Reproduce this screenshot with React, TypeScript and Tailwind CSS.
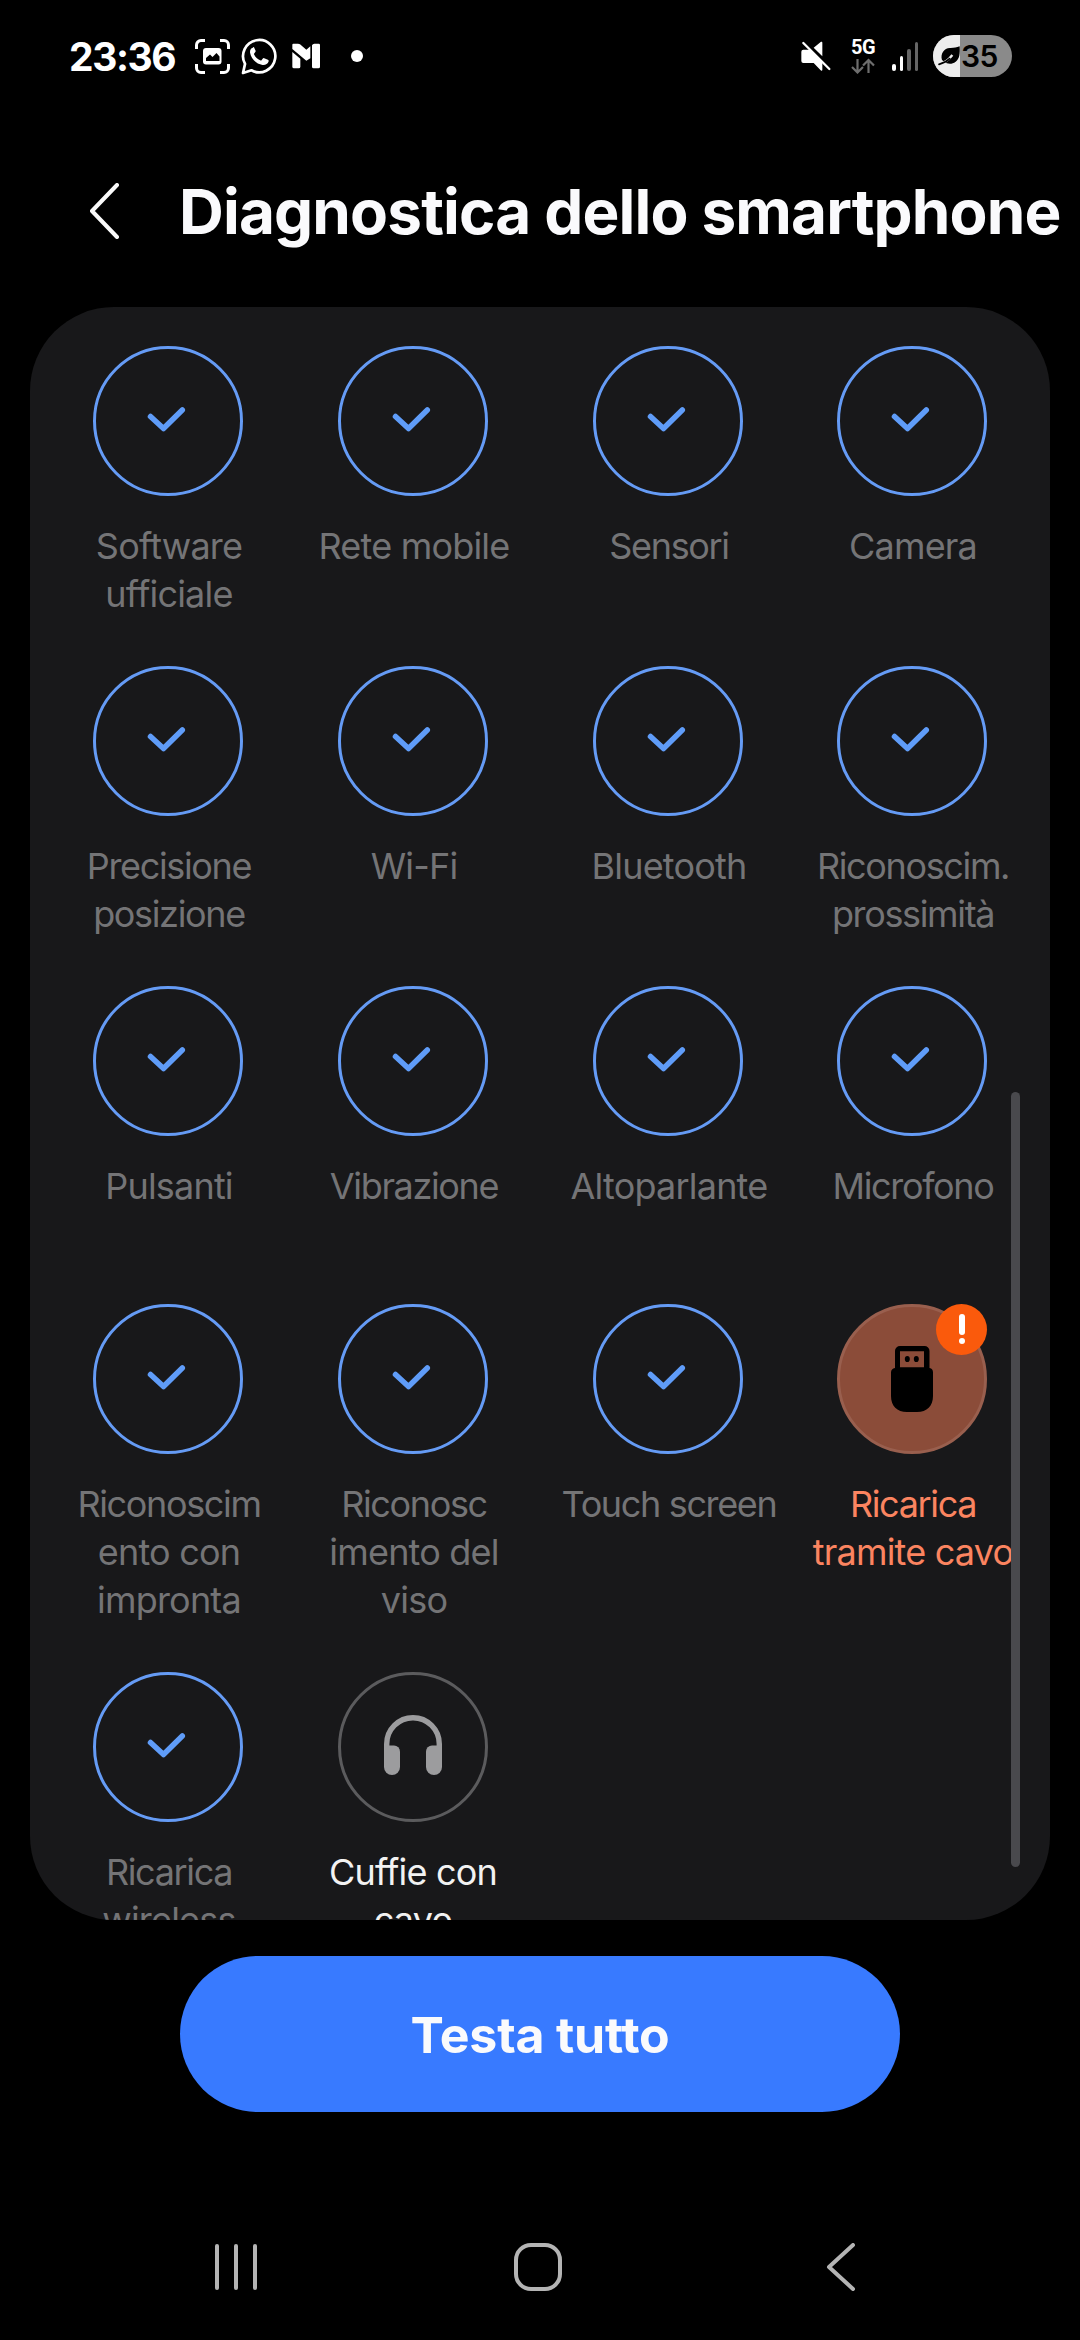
type TCheck = {
    lines: string[];
    state?: "done" | "failed" | "pending";
};

type TRow = {
    height: string;
    checks: TCheck[];
};

const rows: TRow[] = [
    {
        height: "h-[320px]",
        checks: [
            { lines: ["Software", "ufficiale"] },
            { lines: ["Rete mobile"] },
            { lines: ["Sensori"] },
            { lines: ["Camera"] },
        ],
    },
    {
        height: "h-[320px]",
        checks: [
            { lines: ["Precisione", "posizione"] },
            { lines: ["Wi-Fi"] },
            { lines: ["Bluetooth"] },
            { lines: ["Riconoscim.", "prossimità"] },
        ],
    },
    {
        height: "h-[318px]",
        checks: [
            { lines: ["Pulsanti"] },
            { lines: ["Vibrazione"] },
            { lines: ["Altoparlante"] },
            { lines: ["Microfono"] },
        ],
    },
    {
        height: "h-[368px]",
        checks: [
            { lines: ["Riconoscim", "ento con", "impronta"] },
            { lines: ["Riconosc", "imento del", "viso"] },
            { lines: ["Touch screen"] },
            { lines: ["Ricarica", "tramite cavo"], state: "failed" },
        ],
    },
    {
        height: "h-[320px]",
        checks: [
            { lines: ["Ricarica", "wireless"] },
            { lines: ["Cuffie con", "cavo"], state: "pending" },
        ],
    },
];

// lines that need a bit less letter spacing
const tightLines = [
    "Sensori",
    "Precisione",
    "posizione",
    "Riconoscim.",
    "prossimità",
    "Vibrazione",
    "Microfono",
    "Riconoscim",
    "Riconosc",
    "Touch screen",
    "Ricarica",
];

const StatusBar = () => {
    return (
        <div className="flex h-28 items-center justify-between pr-[68px] pl-[69px]">
            <div className="flex items-center">
                <span className="w-[126px] text-[39px] leading-none font-bold tracking-[-1.4px]">23:36</span>
                <svg className="h-[35px] w-[35px]" viewBox="0 0 35 35" fill="none">
                    <path
                        d="M1.5 10V6a4.500 4.500 0 0 1 4.500-4.500H10M25 1.500h4A4.500 4.500 0 0 1 33.500 6v4M33.500 25v4a4.500 4.500 0 0 1-4.500 4.500h-4M10 33.500H6A4.500 4.500 0 0 1 1.500 29v-4"
                        stroke="white"
                        strokeWidth="3"
                    />
                    <rect x="8" y="9" width="18.500" height="16.500" rx="3" fill="white" />
                    <path d="M11 22v-3l4-3.500 2.500 2.500 4-4 3 3.500V22Z" fill="black" />
                </svg>
                <svg className="ml-[11px] h-[37px] w-[37px]" viewBox="0 0 110 110" fill="none">
                    <path
                        d="M6 104l6-27A48 48 0 1 1 31 96Z"
                        stroke="white"
                        strokeWidth="8"
                        strokeLinejoin="round"
                    />
                    <path
                        d="M35 29c-6 2-9 8-8 15 3 18 18 33 37 36 8 1 16-3 18-10 1-3 0-4-2-5l-11-5c-2-1-3 0-4 1l-4 5c-1 1-2 1-4 0-8-3-14-9-18-17-1-2 0-3 1-4l3-4c1-1 1-3 0-4l-4-9c-1-2-2-2-4 1Z"
                        fill="white"
                    />
                </svg>
                <svg className="ml-3.5 h-[26px] w-7" viewBox="0 0 84 76" fill="white">
                    <path d="M1 26l24 20v24a5 5 0 0 1-5 5H6a5 5 0 0 1-5-5Z" />
                    <path d="M4 1h14a10 10 0 0 1 6 2l19 16L55 9v36L43 52 1 17V4a3 3 0 0 1 3-3Z" />
                    <path d="M60 6a8 8 0 0 1 8-5h12a4 4 0 0 1 4 4v65a5 5 0 0 1-5 5H65a5 5 0 0 1-5-5Z" />
                </svg>
                <span className="ml-[31px] h-3 w-3 rounded-full bg-white" />
            </div>
            <div className="flex items-center">
                <svg className="h-[30px] w-[30px]" viewBox="0 0 90 90" fill="white">
                    <path d="M7 26h19l38 38v22c0 3-3 4-5 2L38 66H7a6 6 0 0 1-6-6V32a6 6 0 0 1 6-6Z" />
                    <path d="M64 5v41L38 20 59 3c2-2 5-1 5 2Z" />
                    <path d="M7 6l78 78" stroke="white" strokeWidth="7" strokeLinecap="round" />
                </svg>
                <div className="ml-5 flex w-6 flex-col items-center">
                    <span className="font-['Roboto',sans-serif] text-[20px] leading-[17px] font-bold tracking-[-0.5px]">5G</span>
                    <svg className="mt-0.5 h-4 w-6" viewBox="0 0 24 16" fill="none" stroke="#6e6e6e" strokeWidth="2.2">
                        <path d="M6.500 1v13M1 9l5.500 5.500L12 9M17.500 15V2M12 7.500 17.500 2 23 7.500" />
                    </svg>
                </div>
                <div className="ml-[17px] flex items-end gap-1">
                    <span className="h-[7px] w-[3.500px] rounded-full bg-white" />
                    <span className="h-[15px] w-[3.500px] rounded-full bg-white" />
                    <span className="h-[22px] w-[3.500px] rounded-full bg-[#666]" />
                    <span className="h-[29px] w-[3.500px] rounded-full bg-[#666]" />
                </div>
                <div className="ml-[15px] flex h-[42px] w-[79px] items-center overflow-hidden rounded-full bg-[#8a8a8a] text-black">
                    <div className="flex h-full w-[27px] shrink-0 items-center justify-end bg-[#ededed]">
                        <svg className="h-5 w-[22px]" viewBox="0 0 66 60">
                            <path d="M12 42C6 22 20 4 38 6c10 0 18-1 27-5 1 22 0 38-12 46-12 9-26 7-34 0Z" />
                            <path d="M1 55c14-2 30-12 42-28" fill="none" stroke="#ededed" strokeWidth="7" />
                            <path d="M3 55c12-3 24-9 32-17" fill="none" stroke="black" strokeWidth="5" strokeLinecap="round" />
                        </svg>
                    </div>
                    <span className="ml-px text-[30px] leading-none font-semibold tracking-[-0.5px]">35</span>
                </div>
            </div>
        </div>
    );
};

const UsbIcon = () => (
    <svg className="h-[66px] w-[42px]" viewBox="0 0 42 66">
        <path
            fillRule="evenodd"
            d="M4 22V5a5 5 0 0 1 5-5h24.500a5 5 0 0 1 5 5v17c2.500.5 3.500 2 3.500 4.500V50c0 10-6 16-16 16H16C6 66 0 60 0 50V26.500C0 24 1.500 22.500 4 22ZM9 5.300v16h24v-16Z"
        />
        <ellipse cx="16.300" cy="13" rx="2.500" ry="3.100" />
        <ellipse cx="25.300" cy="13" rx="2.500" ry="3.100" />
    </svg>
);

const HeadphonesIcon = () => (
    <svg className="-mt-1 h-[60px] w-[58px]" viewBox="0 0 58 60" fill="#9c9c9e">
        <path d="M2.700 40V29a26.300 26.300 0 0 1 52.600 0v11" fill="none" stroke="#9c9c9e" strokeWidth="5.400" />
        <path d="M0 30.500h10a6 6 0 0 1 6 6V52a8 8 0 0 1-16 0Z" />
        <path d="M58 30.500H48a6 6 0 0 0-6 6V52a8 8 0 0 0 16 0Z" />
    </svg>
);

const CheckItem = ({ lines, state = "done" }: TCheck) => {
    return (
        <div className="flex flex-col items-center">
            {state === "done" && (
                <div className="h-[150px] w-[150px] rounded-full border-3 border-[#659bf5]">
                    <svg className="h-36 w-36" viewBox="3 3 144 144" fill="none">
                        <path
                            d="M57.500 70.500 70.500 82.500 89.300 64"
                            stroke="#5f9cf8"
                            strokeWidth="5.500"
                            strokeLinecap="round"
                            strokeLinejoin="round"
                        />
                    </svg>
                </div>
            )}
            {state === "failed" && (
                <div className="relative flex h-[150px] w-[150px] items-center justify-center rounded-full border-3 border-[#995f4e] bg-[#8b4c39]">
                    <UsbIcon />
                    <div className="absolute -top-[3px] -right-[3px] flex h-[51px] w-[51px] flex-col items-center gap-[3px] rounded-full bg-[#fa5a0c] pt-2.5">
                        <span className="h-[21px] w-1.5 rounded-full bg-white" />
                        <span className="h-1.5 w-1.5 rounded-full bg-white" />
                    </div>
                </div>
            )}
            {state === "pending" && (
                <div className="flex h-[150px] w-[150px] items-center justify-center rounded-full border-3 border-[#5b5b5d]">
                    <HeadphonesIcon />
                </div>
            )}
            <div
                className={
                    state === "done"
                        ? "mt-[26px] pl-0.5 text-[#747476]"
                        : state === "failed"
                          ? "mt-[26px] pl-0.5 text-[#fb8460]"
                          : "mt-[26px] text-[#f2f2f2]"
                }
            >
                {lines.map((line) => (
                    <p
                        key={line}
                        className={
                            tightLines.includes(line)
                                ? "text-center text-[36px] leading-[48px] tracking-[-1.35px] whitespace-nowrap"
                                : "text-center text-[36px] leading-[48px] tracking-[-0.8px] whitespace-nowrap"
                        }
                    >
                        {line}
                    </p>
                ))}
            </div>
        </div>
    );
};

const App = () => {
    return (
        <div className="flex h-[2340px] w-[1080px] flex-col overflow-hidden bg-black font-['Inter',sans-serif] text-white">
            <StatusBar />
            <header className="flex h-[195px] items-start pt-[59px] pl-[88px]">
                <svg className="mt-3 h-14 w-8" viewBox="0 0 32 56" fill="none">
                    <path d="M29 2 4 28l25 26" stroke="#fafafa" strokeWidth="4" strokeLinecap="round" strokeLinejoin="round" />
                </svg>
                <h1 className="mt-px ml-[59px] text-[62px] leading-[80px] font-bold tracking-[-0.85px] whitespace-nowrap text-[#fafafc]">
                    Diagnostica dello smartphone
                </h1>
            </header>
            <main className="relative mx-[30px] h-[1613px] shrink-0 overflow-hidden rounded-[84px] bg-[#18181a] pt-[39px] pl-[18px]">
                {rows.map((row, index) => (
                    <div key={index} className={`grid grid-cols-[240px_250px_260px_228px] ${row.height}`}>
                        {row.checks.map((check) => (
                            <CheckItem key={check.lines[0]} {...check} />
                        ))}
                    </div>
                ))}
                <div className="absolute top-[785px] right-[30px] h-[775px] w-[9px] rounded-full bg-[#49494d]" />
            </main>
            <button className="mx-auto mt-9 h-[156px] w-[720px] shrink-0 rounded-full bg-[#387aff] pt-0.5 text-[50px] font-bold tracking-[-0.2px] text-[#fafafc] [font-variant-ligatures:none]">
                Testa tutto
            </button>
            <nav className="mt-[131px] flex h-12 items-center pl-[215px]">
                <div className="flex gap-[15px]">
                    <span className="h-[46px] w-1 rounded-full bg-[#b4b4b4]" />
                    <span className="h-[46px] w-1 rounded-full bg-[#b4b4b4]" />
                    <span className="h-[46px] w-1 rounded-full bg-[#b4b4b4]" />
                </div>
                <span className="ml-[257px] h-12 w-12 rounded-[17px] border-[4.500px] border-[#b4b4b4]" />
                <svg className="ml-[264px] h-12 w-[30px]" viewBox="0 0 30 48" fill="none">
                    <path d="M27 2 3 24l24 22" stroke="#b4b4b4" strokeWidth="4" strokeLinecap="round" strokeLinejoin="round" />
                </svg>
            </nav>
        </div>
    );
};

export default App;
